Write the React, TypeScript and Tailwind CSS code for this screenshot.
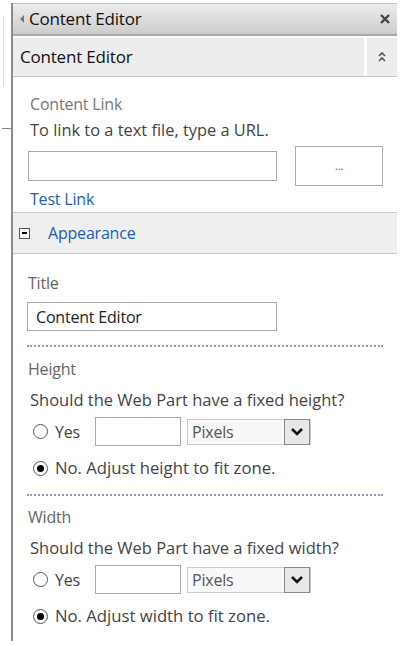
import React from "react";

function Radio({ checked }: { checked?: boolean }) {
  return (
    <span className="inline-flex h-[15px] w-[15px] shrink-0 items-center justify-center rounded-full border border-[#555] bg-white">
      {checked && <span className="h-[7px] w-[7px] rounded-full bg-black" />}
    </span>
  );
}

function SizeSection({ label, question, fit, labelTop }: { label: string; question: string; fit: string; labelTop: string }) {
  return (
    <div>
      <div className={`${labelTop} pl-[15px] text-[#666]`}>{label}</div>
      <div className="pl-[17px] pt-[9px] text-[16.5px] tracking-normal text-[#444]">{question}</div>
      <div className="flex h-[29px] items-center pl-[20px] mt-[6px]">
        <Radio />
        <span className="ml-[7px] text-[#444]">Yes</span>
        <div className="ml-[15px] h-[29px] w-[86px] border border-[#aaa] bg-white" />
        <div className="ml-[6px] flex h-[26px] w-[124px] items-center border border-[#ccc] bg-[#f8f8f8]">
          <span className="flex-1 pl-[4px] text-[#555]">Pixels</span>
          <span className="flex h-[26px] w-[26px] items-center justify-center border border-[#888] bg-[#e8e8e8]">
            <svg width="14" height="10" viewBox="0 0 14 10">
              <path d="M2 2 L7 7 L12 2" fill="none" stroke="#111" strokeWidth="2.6" />
            </svg>
          </span>
        </div>
      </div>
      <div className="mt-[11px] flex items-center pl-[20px] text-[16.7px] tracking-normal text-[#444]">
        <Radio checked />
        <span className="ml-[7px]">{fit}</span>
      </div>
    </div>
  );
}

export default function App() {
  return (
    <div className="relative h-[646px] w-[400px] overflow-hidden bg-white font-['Open_Sans',sans-serif] text-[16px] leading-[22px] tracking-[-0.2px]">
      {/* stray edge marks */}
      <div className="absolute left-[3px] top-[16px] h-[70px] w-px bg-[#e2e2e2]" />
      <div className="absolute left-[2px] top-[128px] h-px w-[9px] bg-[#888]" />

      <div className="ml-[11px] mt-[3px] h-[638px] w-[386px] border-l-2 border-[#8a8a8a]">
        {/* title bar */}
        <div className="flex h-[33px] items-center border-b-2 border-t border-[#a8a8a8] border-t-[#c8c8c8] bg-gradient-to-b from-[#ececec] to-[#cdcdcd] pl-[6px] pr-[6px]">
          <svg width="6" height="10" viewBox="0 0 6 10" className="mr-[4px]">
            <path d="M5 1 L1 5 L5 9 Z" fill="#777" />
          </svg>
          <span className="flex-1 text-[17px] text-[#111]">Content Editor</span>
          <svg width="12" height="12" viewBox="0 0 12 12">
            <path d="M2 2 L10 10 M10 2 L2 10" stroke="#444" strokeWidth="2.4" />
          </svg>
        </div>

        {/* web part header */}
        <div className="mt-[2px] flex h-[39px] border-b border-[#c8c8c8]">
          <div className="flex flex-1 items-center bg-[#ededed] pl-[7px] text-[17px] text-[#111]">Content Editor</div>
          <div className="ml-[3px] flex w-[30px] items-center justify-center bg-[#ededed]">
            <svg width="10" height="12" viewBox="0 0 10 12">
              <path d="M2 5 L5 2 L8 5 M2 10 L5 7 L8 10" fill="none" stroke="#555" strokeWidth="1.6" />
            </svg>
          </div>
        </div>

        {/* content link */}
        <div className="pl-[17px] pt-[16px] text-[#777]">Content Link</div>
        <div className="pl-[17px] pt-[4px] text-[16.4px] tracking-normal text-[#444]">To link to a text file, type a URL.</div>
        <div className="flex items-start pl-[15px] pt-[5px]">
          <div className="mt-[5px] h-[30px] w-[249px] border border-[#aaa] bg-white" />
          <div className="ml-[18px] flex h-[40px] w-[88px] items-center justify-center border border-[#aaa] bg-white text-[11px] text-[#555]">
            ...
          </div>
        </div>
        <div className="pl-[17px] pt-[2px] text-[#1f5ea8]">Test Link</div>

        {/* appearance */}
        <div className="mt-[2px] flex h-[42px] items-center border-y border-[#c8c8c8] bg-[#efefef] pl-[6px]">
          <span className="flex h-[11px] w-[11px] items-center justify-center border border-[#555] bg-white">
            <span className="h-[2px] w-[5px] bg-black" />
          </span>
          <span className="ml-[18px] text-[#1f5ea8]">Appearance</span>
        </div>

        <div className="pl-[15px] pt-[18px] text-[#666]">Title</div>
        <div className="pl-[14px] pt-[8px]">
          <div className="flex h-[29px] w-[250px] items-center border border-[#aaa] bg-white pl-[8px] text-[#222]">
            Content Editor
          </div>
        </div>

        <div className="ml-[14px] mt-[14px] w-[356px] border-t-2 border-dotted border-[#7f9fca]" />
        <SizeSection
          labelTop="pt-[11px]"
          label="Height"
          question="Should the Web Part have a fixed height?"
          fit="No. Adjust height to fit zone."
        />

        <div className="ml-[14px] mt-[15px] w-[356px] border-t-2 border-dotted border-[#7f9fca]" />
        <SizeSection
          labelTop="pt-[10px]"
          label="Width"
          question="Should the Web Part have a fixed width?"
          fit="No. Adjust width to fit zone."
        />
      </div>
    </div>
  );
}
